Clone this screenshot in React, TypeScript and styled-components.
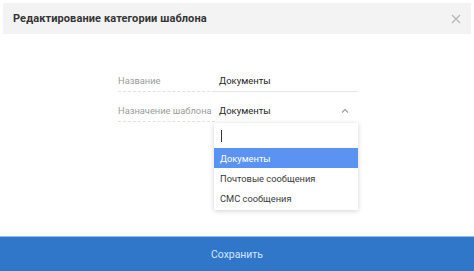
import React from 'react';
import styled, { createGlobalStyle } from 'styled-components';

const GlobalStyle = createGlobalStyle`
  html, body {
    margin: 0;
    padding: 0;
    background: #ffffff;
    font-family: Roboto, 'Noto Sans', Arial, sans-serif;
  }
`;

const Page = styled.div`
  display: flex;
  flex-direction: column;
  height: 100vh;
  box-sizing: border-box;
`;

const Header = styled.div`
  display: flex;
  align-items: center;
  justify-content: space-between;
  margin: 3px 3px 0;
  height: 31px;
  padding: 0 9px 0 10px;
  background: #f3f3f3;
`;

const Title = styled.h1`
  margin: 0;
  font-size: 11px;
  font-weight: 700;
  color: #353535;
  letter-spacing: 0.1px;
`;

const CloseButton = styled.button`
  display: flex;
  align-items: center;
  justify-content: center;
  width: 12px;
  height: 12px;
  padding: 0;
  border: none;
  background: none;
  cursor: pointer;
`;

const Form = styled.div`
  display: flex;
  flex-direction: column;
  gap: 8px;
  width: 240px;
  margin: 36px auto 0;
  transform: translateX(1px);
`;

const Row = styled.div`
  display: grid;
  grid-template-columns: 97px 1fr;
  height: 22px;
`;

const Label = styled.div`
  display: flex;
  align-items: center;
  font-size: 9.3px;
  color: #9b9b9b;
  border-bottom: 1px dashed #e2e2e2;
  white-space: nowrap;
`;

const Field = styled.div<{ $open?: boolean }>`
  position: relative;
  display: flex;
  align-items: center;
  justify-content: space-between;
  padding: 0 9px 0 4px;
  font-size: 9.5px;
  font-weight: 400;
  color: #1f1f1f;
  border-bottom: 1px solid ${(p) => (p.$open ? 'transparent' : '#e8e8e8')};
`;

const Menu = styled.div`
  position: absolute;
  top: 23px;
  left: -1px;
  right: 0;
  display: flex;
  flex-direction: column;
  padding-bottom: 2px;
  background: #ffffff;
  box-shadow: 0 1px 5px rgba(0, 0, 0, 0.18);
  z-index: 2;
`;

const Search = styled.div`
  display: flex;
  align-items: center;
  height: 25px;
  padding: 0 7px;
`;

const Caret = styled.span`
  width: 1px;
  height: 12px;
  background: #333333;
`;

const Option = styled.div<{ $active?: boolean }>`
  display: flex;
  align-items: center;
  height: 20px;
  padding: 0 6px;
  font-size: 9.3px;
  color: ${(p) => (p.$active ? '#ffffff' : '#3a3a3a')};
  background: ${(p) => (p.$active ? '#5a93f2' : 'transparent')};
`;

const Footer = styled.button`
  margin-top: auto;
  height: 35px;
  border: none;
  border-top: 1px solid #8fbdec;
  background: #3077c9;
  color: #d4e6ff;
  font-family: inherit;
  font-size: 10.4px;
  cursor: pointer;
`;

const options = ['Документы', 'Почтовые сообщения', 'СМС сообщения'];

export default function App() {
  return (
    <>
      <GlobalStyle />
      <Page>
        <Header>
          <Title>Редактирование категории шаблона</Title>
          <CloseButton aria-label="Закрыть">
            <svg width="10" height="10" viewBox="0 0 10 10">
              <path d="M1 1L9 9M9 1L1 9" stroke="#b5b5b5" strokeWidth="1.2" />
            </svg>
          </CloseButton>
        </Header>
        <Form>
          <Row>
            <Label>Название</Label>
            <Field>Документы</Field>
          </Row>
          <Row>
            <Label>Назначение шаблона</Label>
            <Field $open>
              Документы
              <svg width="8" height="5" viewBox="0 0 8 5">
                <path d="M1 4.5L4 1.5L7 4.5" fill="none" stroke="#9a9a9a" strokeWidth="1.1" />
              </svg>
              <Menu>
                <Search>
                  <Caret />
                </Search>
                {options.map((o, i) => (
                  <Option key={o} $active={i === 0}>
                    {o}
                  </Option>
                ))}
              </Menu>
            </Field>
          </Row>
        </Form>
        <Footer>Сохранить</Footer>
      </Page>
    </>
  );
}
